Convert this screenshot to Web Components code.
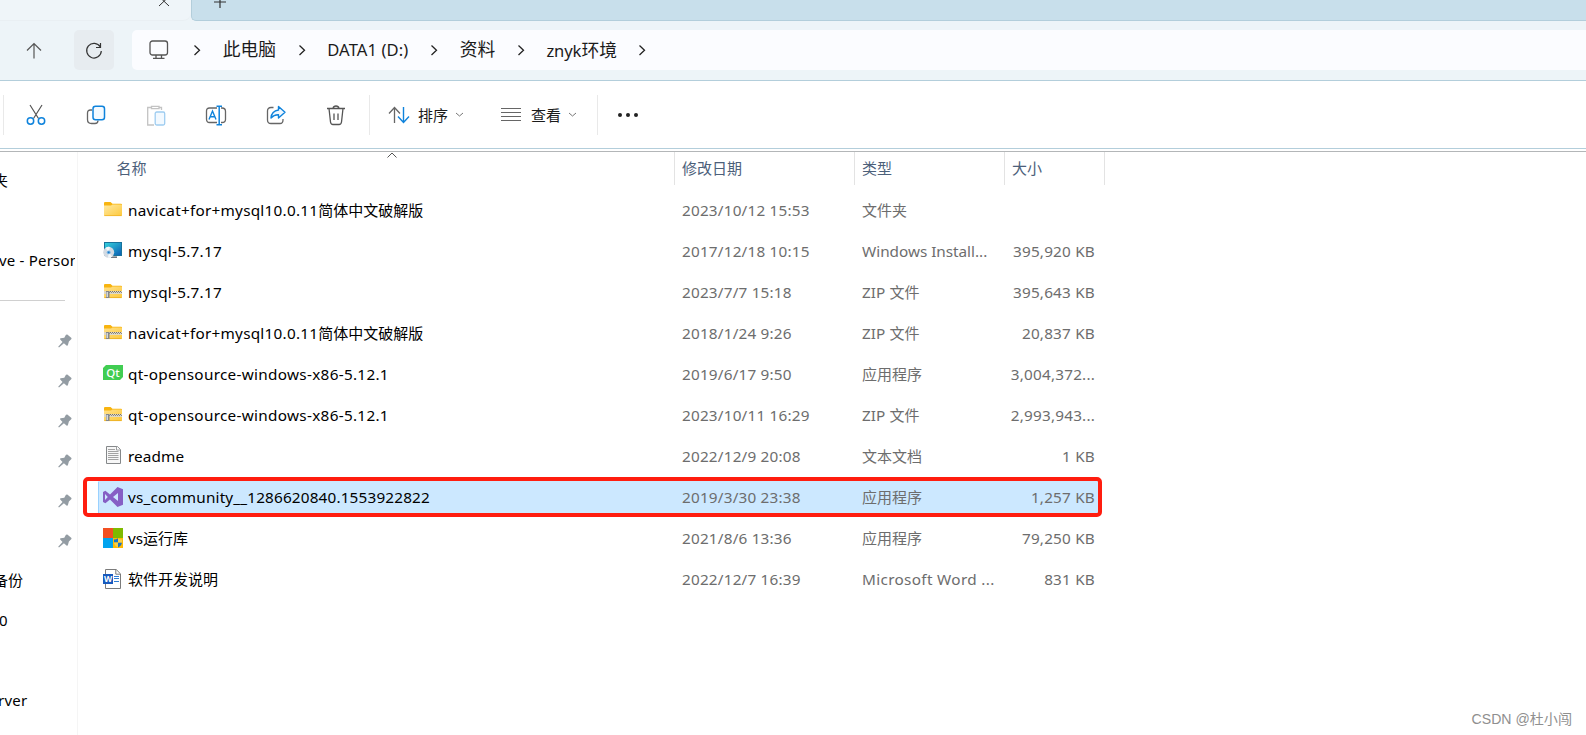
<!DOCTYPE html>
<html lang="zh-CN">
<head>
<meta charset="utf-8">
<title>znyk环境</title>
<style>
    html, body {
        margin: 0;
        height: 100%;
        overflow: hidden;
        background: #fff;
        font-family: "Noto Sans", "Noto Sans CJK SC", sans-serif;
        font-size: 15px;
        color: #000;
    }
</style>
</head>
<body>
<file-explorer>
    <tab-strip slot="tabs"></tab-strip>
    <address-bar slot="address">
        <path-crumb>此电脑</path-crumb>
        <path-crumb latin="0.1px">DATA1 (D:)</path-crumb>
        <path-crumb>资料</path-crumb>
        <path-crumb latin="-0.1px" low>znyk环境</path-crumb>
    </address-bar>
    <command-bar slot="commands"></command-bar>
    <side-nav slot="nav">
        <nav-item style="--shift:-7px">夹</nav-item>
        <nav-item></nav-item>
        <nav-item style="--shift:-1px">ve - Personal</nav-item>
        <nav-item divider></nav-item>
        <nav-item pinned></nav-item>
        <nav-item pinned></nav-item>
        <nav-item pinned></nav-item>
        <nav-item pinned></nav-item>
        <nav-item pinned></nav-item>
        <nav-item pinned></nav-item>
        <nav-item style="--shift:-7px">备份</nav-item>
        <nav-item style="--shift:-1px">0</nav-item>
        <nav-item></nav-item>
        <nav-item style="--shift:-2px">rver</nav-item>
    </side-nav>
    <file-list>
        <file-row icon="folder" name="navicat+for+mysql10.0.11简体中文破解版" date="2023/10/12 15:53" type="文件夹" size=""></file-row>
        <file-row icon="msi" name="mysql-5.7.17" date="2017/12/18 10:15" type="Windows Install..." size="395,920 KB" style="--type-track:-.02px"></file-row>
        <file-row icon="zip" name="mysql-5.7.17" date="2023/7/7 15:18" type="ZIP 文件" size="395,643 KB"></file-row>
        <file-row icon="zip" name="navicat+for+mysql10.0.11简体中文破解版" date="2018/1/24 9:26" type="ZIP 文件" size="20,837 KB"></file-row>
        <file-row icon="qt" name="qt-opensource-windows-x86-5.12.1" date="2019/6/17 9:50" type="应用程序" size="3,004,372..." style="--name-track:.3px"></file-row>
        <file-row icon="zip" name="qt-opensource-windows-x86-5.12.1" date="2023/10/11 16:29" type="ZIP 文件" size="2,993,943..." style="--name-track:.3px"></file-row>
        <file-row icon="text" name="readme" date="2022/12/9 20:08" type="文本文档" size="1 KB" style="--name-track:.1px"></file-row>
        <file-row icon="vs" name="vs_community__1286620840.1553922822" date="2019/3/30 23:38" type="应用程序" size="1,257 KB" style="--name-track:.17px" selected></file-row>
        <file-row icon="windows" name="vs运行库" date="2021/8/6 13:36" type="应用程序" size="79,250 KB" style="--name-track:0px"></file-row>
        <file-row icon="word" name="软件开发说明" date="2022/12/7 16:39" type="Microsoft Word ..." size="831 KB" style="--type-track:.33px"></file-row>
    </file-list>
    <span slot="mark">CSDN @杜小闯</span>
</file-explorer>

<script>
// wraps the latin runs, they are set a little larger than the chinese ones
const mixed = (text) => text.replace(/[\x20-\x7e]+/g, (run) => `<span class="latin">${run}</span>`)

const ICONS = {
    folder: `
        <svg width="20" height="20" viewBox="0 0 20 20">
            <defs><linearGradient id="g" x1="0" y1="0" x2="1" y2="1"><stop offset="0" stop-color="#ffe9a3"/><stop offset="1" stop-color="#fdc93c"/></linearGradient></defs>
            <path d="M1 3q0-1 1-1h5.500l2 1.700H18q1 0 1 1V7H1z" fill="#f8b40f"/>
            <path d="M1 5.500h7l1.500-1H18q1 0 1 1V15q0 1-1 1H2q-1 0-1-1z" fill="url(#g)"/>
            <path d="M1.300 15.600h17.400" stroke="#f0b323" stroke-width=".8"/>
        </svg>`,
    zip: `
        <svg width="20" height="20" viewBox="0 0 20 20">
            <defs><linearGradient id="g" x1="0" y1="0" x2="1" y2="1"><stop offset="0" stop-color="#ffe08a"/><stop offset="1" stop-color="#fdc93c"/></linearGradient></defs>
            <path d="M1 3q0-1 1-1h5.500l2 1.700H18q1 0 1 1V7H1z" fill="#f8b40f"/>
            <path d="M1 5.500h7l1.500-1H18q1 0 1 1V15q0 1-1 1H2q-1 0-1-1z" fill="url(#g)"/>
            <path d="M1.300 15.600h17.400" stroke="#e9ab1d" stroke-width=".8"/>
            <path d="M1 9h18v3H1z" fill="#ded8c6"/>
            <path d="M5 9.500h14" stroke="#77736b" stroke-dasharray="1 1"/>
            <path d="M6 10.500h13" stroke="#8b8983" stroke-dasharray="1 1"/>
            <path d="M3 9h3.500v7H3z" fill="#85888b"/>
            <path d="M3.500 10h1.500v5H3.500z" fill="#d5d8da"/>
        </svg>`,
    msi: `
        <svg width="20" height="20" viewBox="0 0 20 20">
            <defs><linearGradient id="g" x1="0" y1="0" x2="1" y2="1"><stop offset="0" stop-color="#35d0dc"/><stop offset="1" stop-color="#0a5fb4"/></linearGradient></defs>
            <path d="M1 1h18v14H1z" fill="#17729b"/>
            <path d="M2 2h16v12H2z" fill="url(#g)"/>
            <path d="M8 15.500h6v1.300H8z" fill="#4b5560"/>
            <circle cx="5.700" cy="11.300" r="5.500" fill="#d3dae2"/>
            <path d="M5.700 11.300L2.500 6.900A5.500 5.500 0 0 1 7 6zM5.700 11.300l3.500 4.200A5.500 5.500 0 0 1 5 16.800z" fill="#f3f6f8"/>
            <circle cx="5.700" cy="11.300" r="1.900" fill="#76b5e5"/>
            <circle cx="5.700" cy="11.300" r=".9" fill="#1977c4"/>
        </svg>`,
    qt: `
        <svg width="20" height="20" viewBox="0 0 20 20">
            <path d="M3 1h17v12l-3 3H0V4z" fill="#41cd52"/>
            <text x="10" y="12.500" text-anchor="middle" font-family="Noto Sans, sans-serif" font-size="11.500" font-weight="500" fill="#fff">Qt</text>
        </svg>`,
    text: `
        <svg width="20" height="20" viewBox="0 0 20 20">
            <path d="M3.500.5h10.800L17.500 3.500v14H3.500z" fill="#f7f7f7" stroke="#85888a"/>
            <path d="M13.500.5v3.500h4" fill="#fff" stroke="#85888a" stroke-width=".8"/>
            <path d="M5 3.500H12M5 5.500h10.500M5 7.500h10.500M5 9.500h10.500M5 11.500h10.500M5 13.500h10.500" stroke="#a3a3a3"/>
        </svg>`,
    vs: `
        <svg width="20" height="20" viewBox="0 0 20 20">
            <path fill-rule="evenodd" fill="#865fc5" d="M14.500 0L20 2.200v15.500L14.500 20 7 12.600l-4.600 3.600L0 15V5l2.400-1.200L7 7.400zM15 6l-5 4 5 4zM2 7v6l2.800-3z"/>
        </svg>`,
    windows: `
        <svg width="20" height="20" viewBox="0 0 20 20">
            <path d="M0 0h10v10H0z" fill="#f25022"/><path d="M10 0h10v10H10z" fill="#7fba00"/>
            <path d="M0 10h10v10H0z" fill="#00a4ef"/><path d="M10 10h10v10H10z" fill="#ffb900"/>
            <path d="M11 11.500q2.500 0 4-1.200v4.200h-4zM15 14.500h4q-.5 3.400-4 5z" fill="#1673c8"/>
            <path d="M15 10.300q1.500 1.200 4 1.200v3h-4zM11 14.500h4v5q-3.500-1.600-4-5z" fill="#f7d04a"/>
        </svg>`,
    word: `
        <svg width="20" height="20" viewBox="0 0 20 20">
            <path d="M2.500.5h10.700l4.300 4.300v14.700h-15z" fill="#fff" stroke="#7b7b7b"/>
            <path d="M12.800.800v4.400h4.400" fill="none" stroke="#7b7b7b"/>
            <path d="M11 7.500h5M11 9.500h5M11 12.500h5" stroke="#2f7fd6"/>
            <path d="M0 5h10v10H0z" fill="#185abd"/>
            <text x="5" y="13" text-anchor="middle" font-family="Noto Sans, sans-serif" font-size="8.500" font-weight="700" fill="#fff">W</text>
        </svg>`
}

class BaseElement extends HTMLElement {
    constructor() {
        super()
        this.attachShadow({ mode: 'open' })
    }
    connectedCallback() {
        const template = document.createElement('template')
        template.innerHTML = this.getStyles() + this.getTemplate()
        this.shadowRoot.replaceChildren(template.content.cloneNode(true))
    }
}

class FileExplorer extends BaseElement {
    getTemplate() {
        return `
            <slot name="tabs"></slot>
            <slot name="address"></slot>
            <slot name="commands"></slot>
            <main>
                <slot name="nav"></slot>
                <slot></slot>
            </main>
            <div class="mark"><slot name="mark"></slot></div>
        `
    }
    getStyles() {
        return `
            <style>
                :host {
                    display: flex;
                    flex-direction: column;
                    height: 100vh;
                    position: relative;
                    overflow: hidden;
                }
                main {
                    flex: 1;
                    min-height: 0;
                    display: flex;
                    margin-top: 2px;
                    border-top: 1px solid #b3b6b8;
                }
                .mark {
                    position: absolute;
                    right: 14px;
                    bottom: 6px;
                    font: 14.1px/20px "Liberation Sans", "Noto Sans CJK SC", sans-serif;
                    color: #8f8f8f;
                }
            </style>
        `
    }
}

class TabStrip extends BaseElement {
    getTemplate() {
        return `
            <div class="tab">
                <svg width="12" height="8" viewBox="0 0 12 8"><path d="M1-3.500l10 9.500M11-3.500L1 6" stroke="#333" fill="none"/></svg>
            </div>
            <div class="rest">
                <svg width="14" height="9" viewBox="0 0 14 9"><path d="M1 2h12M7-4v12" stroke="#333" stroke-width="1.200" fill="none"/></svg>
            </div>
        `
    }
    getStyles() {
        return `
            <style>
                :host {
                    display: flex;
                    height: 21px;
                    background: #edf4f8;
                }
                svg { display: block; }
                .tab {
                    box-sizing: border-box;
                    width: 191px;
                    padding-left: 158px;
                    background: #eff5f9;
                    border-bottom: 1px solid #e9eff3;
                    border-radius: 0 0 8px 0;
                }
                .rest {
                    flex: 1;
                    box-sizing: border-box;
                    padding-left: 21px;
                    background: #c8dfeb;
                    border-left: 1px solid #b3cedb;
                    border-bottom: 1px solid #b3cedb;
                    border-radius: 0 0 0 5px;
                }
            </style>
        `
    }
}

class AddressBar extends BaseElement {
    getTemplate() {
        return `
            <div class="up"><svg width="16" height="17" viewBox="0 0 16 17"><path d="M8 16.500V1.500M1 8.500l7-7 7 7" fill="none" stroke="#555" stroke-width="1.200"/></svg></div>
            <div class="refresh"><svg width="18" height="18" viewBox="0 0 18 18"><path d="M15.300 5A7.300 7.300 0 1 0 16.300 9M15.500 1v4.500H11" fill="none" stroke="#333" stroke-width="1.200"/></svg></div>
            <div class="path">
                <svg class="pc" width="20" height="20" viewBox="0 0 20 20"><rect x="1" y="1" width="17.500" height="14" rx="2.500" fill="none" stroke="#555" stroke-width="1.300"/><path d="M7 15v3M12.500 15v3M4 18.400h11.500" fill="none" stroke="#555" stroke-width="1.300"/></svg>
                <svg class="sep" width="16" height="16" viewBox="0 0 16 16"><path d="M5.500 3.500L10.500 8.300 5.500 13" fill="none" stroke="#222" stroke-width="1.300"/></svg>
                <slot></slot>
            </div>
        `
    }
    getStyles() {
        return `
            <style>
                :host {
                    display: flex;
                    box-sizing: border-box;
                    height: 60px;
                    padding: 9px 0 10px;
                    background: #edf4f8;
                    border-bottom: 1px solid #b3cedb;
                }
                .up, .refresh {
                    display: flex;
                    align-items: center;
                    justify-content: center;
                }
                .up { width: 68px; }
                .refresh {
                    width: 40px;
                    margin: 0 18px 0 6px;
                    background: #e7ecf0;
                    border-radius: 5px;
                }
                .refresh svg { margin-top: 1px; }
                .path {
                    flex: 1;
                    display: flex;
                    align-items: center;
                    padding-left: 17px;
                    background: #fbfcff;
                    border-radius: 5px 0 0 5px;
                }
                .sep { margin-left: 20px; }
            </style>
        `
    }
}

class PathCrumb extends BaseElement {
    getTemplate() {
        return `
            <span class="label">${mixed(this.textContent)}</span>
            <svg width="16" height="16" viewBox="0 0 16 16"><path d="M5.500 3.500L10.500 8.300 5.500 13" fill="none" stroke="#222" stroke-width="1.300"/></svg>
        `
    }
    getStyles() {
        return `
            <style>
                :host {
                    display: flex;
                    align-items: center;
                    gap: 17.5px;
                    padding-left: 17.7px;
                    font-size: 17.8px;
                    line-height: 24px;
                    white-space: nowrap;
                    color: #1b1b1b;
                }
                .label { padding-bottom: 2px; }
                :host([low]) .label { padding-bottom: 0; }
                .latin {
                    font-size: 16.6px;
                    letter-spacing: ${this.getAttribute('latin') || 0};
                }
            </style>
        `
    }
}

class CommandBar extends BaseElement {
    getTemplate() {
        const down = `<svg class="down" width="9" height="6" viewBox="0 0 9 6"><path d="M1 1l3.500 3L8 1" fill="none" stroke="#777"/></svg>`
        return `
            <i></i>
            <b><svg width="20" height="22" viewBox="0 0 20 22"><path d="M4 1l8.500 13.500M16 1L7.500 14.500" fill="none" stroke="#555" stroke-width="1.200"/><g fill="none" stroke="#0f83dc" stroke-width="1.500"><circle cx="4.500" cy="17" r="3.200"/><circle cx="15.500" cy="17" r="3.200"/></g></svg></b>
            <b><svg width="20" height="20" viewBox="0 0 20 20"><path d="M6 5H4.500Q1.500 5 1.500 8v6.500q0 4 4 4H9q3 0 3-3" fill="none" stroke="#666" stroke-width="1.300"/><rect x="7" y="1.200" width="11.500" height="13.500" rx="2.500" fill="#f4faff" stroke="#0f83dc" stroke-width="1.500"/></svg></b>
            <b><svg width="20" height="21" viewBox="0 0 20 21"><path d="M6 2.500H1.700v17.500H8M13 2.500h2.500V5M5.500 1.300h7.500v2.400H5.500z" fill="none" stroke="#c3c3c3" stroke-width="1.300"/><rect x="9.200" y="7" width="9.500" height="13" rx="1.500" fill="#f2f9ff" stroke="#9fcdf1" stroke-width="1.300"/></svg></b>
            <b><svg width="22" height="21" viewBox="0 0 22 21"><path d="M12 3H4.500Q1.500 3 1.500 6v8q0 3.500 3 3.500H12M16 3h1q3.500 0 3.500 3.500v8q0 3-3.500 3h-1" fill="none" stroke="#666" stroke-width="1.300"/><path d="M11.500 1.300h5.500M14.200 1.300v18.400M11.500 19.700h5.500" stroke="#0f83dc" stroke-width="1.500"/><path d="M4 14.500L7.500 6 11 14.500M5.200 11.700h4.600" fill="none" stroke="#0f83dc" stroke-width="1.400"/></svg></b>
            <b><svg width="20" height="20" viewBox="0 0 20 20"><path d="M7.500 2.500H5q-3.500 0-3.500 3.500v9q0 3.500 3.500 3.500h9q3 0 3-3.500v-1" fill="none" stroke="#666" stroke-width="1.300"/><path d="M12.500 1.500L19 7.300l-6.500 5.700V9.700Q8 9.500 5 13q.6-7 7.500-8z" fill="#f0f8ff" stroke="#0f83dc" stroke-width="1.400" stroke-linejoin="round"/></svg></b>
            <b><svg width="20" height="21" viewBox="0 0 20 21"><path d="M1 3.500h18M3 3.500L4.500 17q.3 2.500 2.500 2.500h6q2.200 0 2.500-2.500L17 3.500M7 3.300Q7.500 1 10 1t3 2.300M8 8.500v6.500M12 8.500v6.500" fill="none" stroke="#555" stroke-width="1.300"/></svg></b>
            <i class="group"></i>
            <div class="sort">
                <svg width="22" height="18" viewBox="0 0 22 18"><path d="M6.500 17V2M1 7.500l5.500-6 5.500 6" fill="none" stroke="#666" stroke-width="1.300"/><path d="M15.500 1v15M10 10.500l5.500 6 5.500-6" fill="none" stroke="#0f83dc" stroke-width="1.400"/></svg>
                <span>排序</span>${down}
            </div>
            <div class="view">
                <svg width="20" height="14" viewBox="0 0 20 14"><path d="M0 .500h20M0 4.500h20M0 8.500h20M0 12.500h20" stroke="#666"/></svg>
                <span>查看</span>${down}
            </div>
            <i></i>
            <svg class="more" width="22" height="6" viewBox="0 0 22 6"><g fill="#222"><circle cx="3" cy="3" r="2"/><circle cx="11" cy="3" r="2"/><circle cx="19" cy="3" r="2"/></g></svg>
        `
    }
    getStyles() {
        return `
            <style>
                :host {
                    display: flex;
                    box-sizing: border-box;
                    align-items: center;
                    height: 68px;
                    padding-left: 3px;
                    border-bottom: 1px solid #b3cedb;
                    color: #1b1b1b;
                }
                i {
                    width: 1px;
                    height: 40px;
                    background: #e9e9e9;
                }
                b {
                    display: flex;
                    justify-content: center;
                    width: 60px;
                }
                b svg { margin-top: 1px; }
                b:first-of-type { margin-left: 2px; }
                .group { margin-left: 3px; }
                .sort, .view {
                    display: flex;
                    align-items: center;
                }
                .sort { margin-left: 18px; width: 113px; }
                .view { width: 96px; }
                .view svg { margin-top: 1px; }
                span { line-height: 22px; }
                .sort span { margin-left: 8px; }
                .view span { margin-left: 10px; }
                .sort .down { margin-left: 7px; }
                .down { margin-left: 6.5px; }
                .more { margin: 1px 0 0 19px; }
            </style>
        `
    }
}

class SideNav extends BaseElement {
    getTemplate() {
        return `<slot></slot>`
    }
    getStyles() {
        return `
            <style>
                :host {
                    display: block;
                    box-sizing: border-box;
                    width: 78px;
                    padding: 8px 2px 0 0;
                    border-right: 1px solid #f5f5f5;
                    overflow: hidden;
                }
            </style>
        `
    }
}

class NavItem extends BaseElement {
    getTemplate() {
        if (this.hasAttribute('divider')) return `<hr>`
        if (this.hasAttribute('pinned')) {
            return `<svg width="14" height="14" viewBox="0 0 14 14"><path d="M7.800.900Q8.500.200 9.300.600L13.200 3.700q.8.700 0 1.500L10.900 7.500 10 10.800q-.5 1.500-1.500.6L5.900 9.300 1 13.500l-.8-.8L4.500 7.900 2.200 5.500q-.7-.9.500-1.200L6.300 3.700z" fill="#939ca3"/></svg>`
        }
        return `<span>${mixed(this.textContent)}</span>`
    }
    getStyles() {
        return `
            <style>
                :host {
                    display: flex;
                    align-items: center;
                    height: 40px;
                    overflow: hidden;
                    white-space: nowrap;
                }
                span {
                    line-height: 22px;
                }
                :host > span, span:first-of-type { margin-left: var(--shift, 0); }
                .latin { margin-left: 0 !important; letter-spacing: .2px; }
                hr {
                    width: 65px;
                    margin: 0;
                    border: 0;
                    border-top: 1px solid #d0d0d0;
                }
                svg { margin: 1px 0 0 58px; }
            </style>
        `
    }
}

class FileList extends BaseElement {
    getTemplate() {
        return `
            <header>
                <div class="name">名称<svg width="10" height="6" viewBox="0 0 10 6"><path d="M.500 5.500L5 1l4.500 4.500" fill="none" stroke="#555"/></svg></div>
                <div>修改日期</div>
                <div>类型</div>
                <div>大小</div>
            </header>
            <slot></slot>
        `
    }
    getStyles() {
        return `
            <style>
                :host {
                    display: block;
                    width: 1027px;
                }
                header {
                    display: grid;
                    grid-template-columns: 597px 180px 150px 100px;
                    height: 32px;
                    margin-bottom: 6px;
                    line-height: 33px;
                    color: #4c607a;
                }
                header div {
                    padding-left: 7px;
                    border-right: 1px solid #e3e3e3;
                }
                header .name {
                    position: relative;
                    padding-left: 38.5px;
                }
                header svg {
                    position: absolute;
                    left: 309px;
                    top: 0;
                }
            </style>
        `
    }
}

class FileRow extends BaseElement {
    getTemplate() {
        const get = (key) => mixed(this.getAttribute(key))
        return `
            <div class="name">${ICONS[this.getAttribute('icon')]}<span>${get('name')}</span></div>
            <div>${get('date')}</div>
            <div class="type">${get('type')}</div>
            <div class="size">${get('size')}</div>
        `
    }
    getStyles() {
        return `
            <style>
                :host {
                    display: grid;
                    grid-template-columns: 577px 180px 150px 93px;
                    align-items: center;
                    height: 41px;
                    margin: 0 7px 0 20px;
                    line-height: 22px;
                    white-space: nowrap;
                    color: #6d6d6d;
                    position: relative;
                }
                :host([selected]) {
                    background: linear-gradient(#cce8ff, #cce8ff) 0 4px / 100% 32px no-repeat;
                }
                /* red frame drawn round the selected row */
                :host([selected])::after {
                    content: "";
                    position: absolute;
                    left: -15px;
                    right: -4px;
                    top: 0;
                    height: 32px;
                    border: 4px solid #ff1d0f;
                    border-radius: 5px;
                }
                :host([selected]) .name { box-shadow: inset 1px 0 #99d1ff; }
                div {
                    padding: 0 0 2px 7px;
                }
                .name {
                    display: flex;
                    align-items: center;
                    gap: 5px;
                    height: 30px;
                    padding-left: 5px;
                    color: #000;
                }
                .name .latin { letter-spacing: var(--name-track, .25px); }
                .type .latin { letter-spacing: var(--type-track, .05px); }
                .size {
                    padding: 0 3px 2px 0;
                    text-align: right;
                }
                .latin {
                    font-size: 15.3px;
                    letter-spacing: .2px;
                }
            </style>
        `
    }
}

customElements.define('file-explorer', FileExplorer)
customElements.define('tab-strip', TabStrip)
customElements.define('address-bar', AddressBar)
customElements.define('path-crumb', PathCrumb)
customElements.define('command-bar', CommandBar)
customElements.define('side-nav', SideNav)
customElements.define('nav-item', NavItem)
customElements.define('file-list', FileList)
customElements.define('file-row', FileRow)
</script>
</body>
</html>
